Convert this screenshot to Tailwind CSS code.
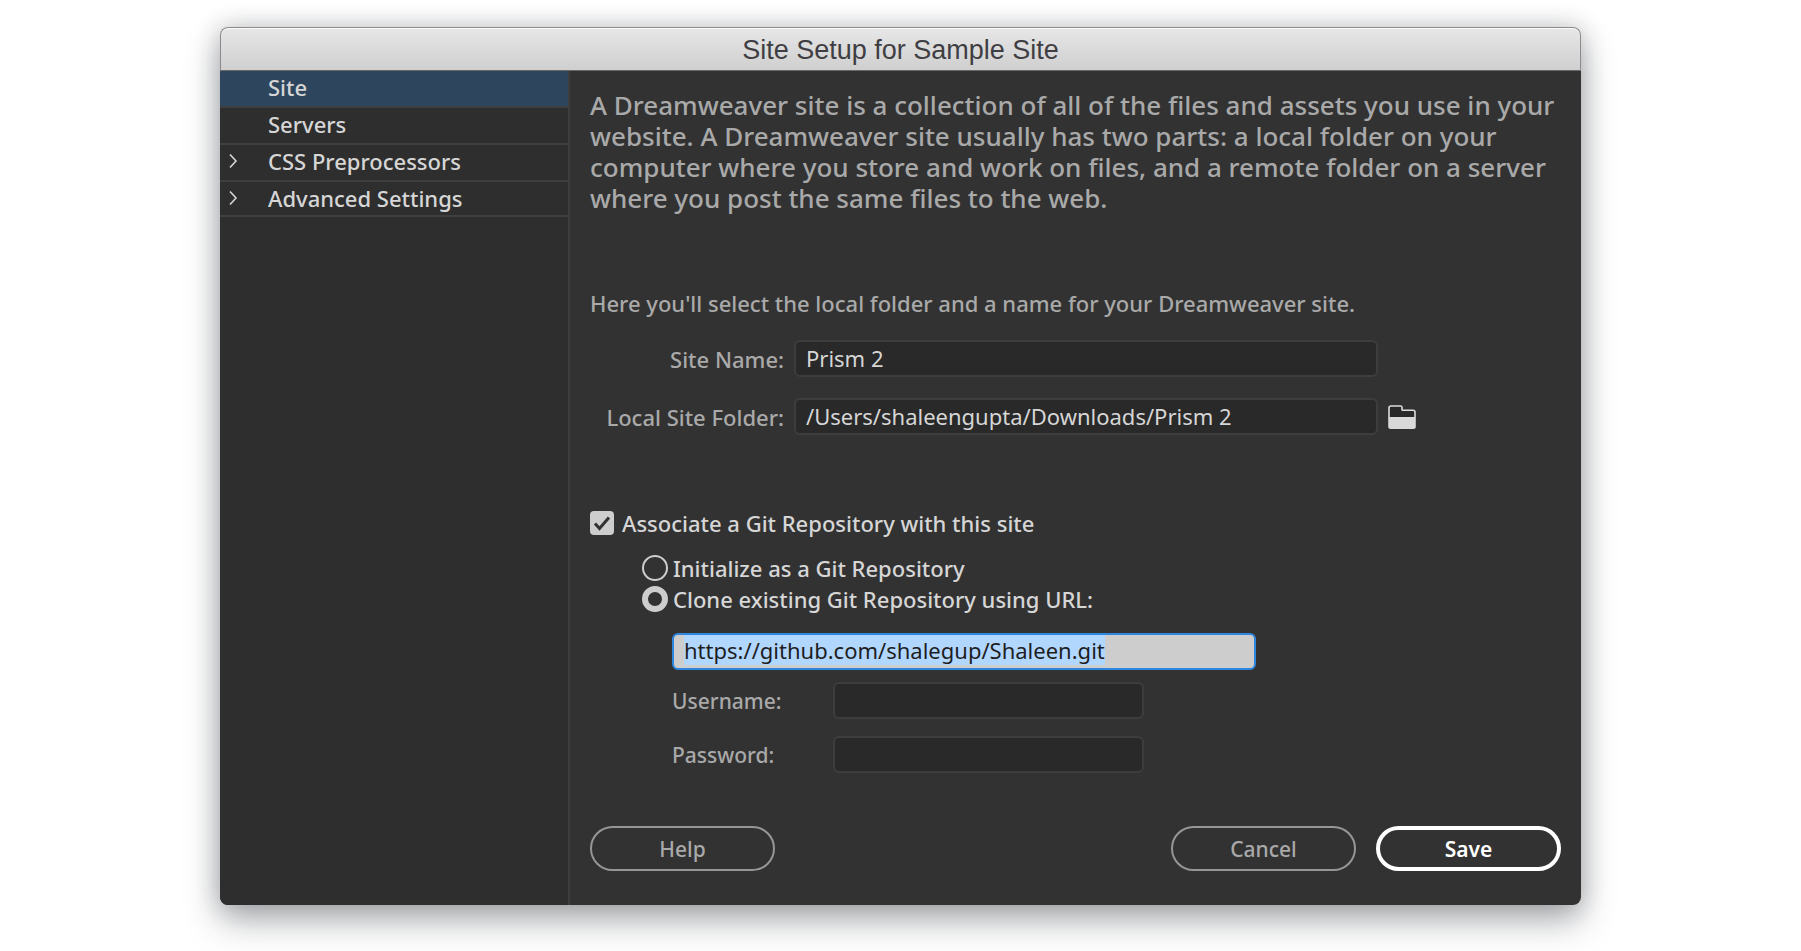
<!DOCTYPE html>
<html lang="en">
<head>
<meta charset="utf-8">
<title>Site Setup for Sample Site</title>
<script src="https://cdn.jsdelivr.net/npm/@tailwindcss/browser@4"></script>
</head>
<body class="bg-white px-[220px] pt-[27px] pb-[46px] font-['Noto_Sans',sans-serif] font-medium text-[22px] leading-7 text-[#d6d6d6]">
<div role="dialog" aria-labelledby="title" class="rounded-lg shadow-[0_16px_34px_rgba(40,44,54,0.36),0_0_24px_rgba(40,44,54,0.24)]">
  <header class="flex h-[44px] items-center justify-center rounded-t-lg border border-[#8b8b8d] border-b-[#686868] bg-linear-to-b from-[#e8e7e8] to-[#cfcfcf] pt-0.5 shadow-[inset_0_1px_0_#fafafa]">
    <h1 id="title" class="font-['Liberation_Sans',sans-serif] text-[27px] leading-8 font-normal text-[#3f3e43]">Site Setup for Sample Site</h1>
  </header>
  <div class="flex rounded-b-lg bg-[#323232]">
    <nav class="w-[350px] shrink-0 rounded-bl-lg border-r-2 border-[#3d3d3d] bg-[#2e2e2e]">
      <ul>
        <li><a href="#site" aria-current="page" class="flex h-[35px] items-center bg-[#2d455d] pb-1 pl-12">Site</a></li>
        <li><a href="#servers" class="flex h-[37px] items-center border-t-2 border-[#3f3f3f] pb-1 pl-12">Servers</a></li>
        <li><a href="#css" class="flex h-[37px] items-center border-t-2 border-[#3f3f3f] pb-1 pl-2">
          <svg class="mr-[30px] h-4 w-[10px]" viewBox="0 0 10 16" fill="none" stroke="#d6d6d6" stroke-width="1.600"><path d="M2 1.500 8 8l-6 6.500"/></svg>CSS Preprocessors</a></li>
        <li><a href="#advanced" class="flex h-[37px] items-center border-y-2 border-[#3f3f3f] pb-0.5 pl-2">
          <svg class="mr-[30px] h-4 w-[10px]" viewBox="0 0 10 16" fill="none" stroke="#d6d6d6" stroke-width="1.600"><path d="M2 1.500 8 8l-6 6.500"/></svg>Advanced Settings</a></li>
      </ul>
    </nav>
    <form class="min-w-0 flex-1 pt-[19px] pr-5 pb-[34px] pl-5 text-[#a9a9a9]">
      <p class="text-[26px] leading-[31px]">A Dreamweaver site is a collection of all of the files and assets you use in your website. A Dreamweaver site usually has two parts: a local folder on your computer where you store and work on files, and a remote folder on a server where you post the same files to the web.</p>
      <p class="mt-[75px]">Here you'll select the local folder and a name for your Dreamweaver site.</p>
      <div class="mt-[23px] flex items-center gap-[10px]">
        <label for="name" class="w-[194px] text-right">Site Name:</label>
        <input id="name" type="text" value="Prism 2" class="h-[37px] w-[584px] rounded-md border-2 border-[#3d3d3d] bg-[#292929] px-[10px] pb-0.5 font-normal text-[#d6d6d6]">
      </div>
      <div class="mt-[21px] flex items-center gap-[10px]">
        <label for="folder" class="w-[194px] text-right">Local Site Folder:</label>
        <input id="folder" type="text" value="/Users/shaleengupta/Downloads/Prism 2" class="h-[37px] w-[584px] rounded-md border-2 border-[#3d3d3d] bg-[#292929] px-[10px] pb-0.5 font-normal text-[#d6d6d6]">
        <button type="button" aria-label="Browse for folder">
          <svg class="h-6 w-7" viewBox="0 0 28 24"><path d="M1 12V3q0-2 2-2h9.500q1.500 0 1.500 1.500V4.500q0 .7.700.7H25q2 0 2 2V12" fill="#292929" stroke="#dcdcdc" stroke-width="1.600"/><path d="M.2 12h27.600v9.500q0 2.500-2.500 2.500H2.700Q.2 24 .2 21.500z" fill="#d9d9d9"/></svg>
        </button>
      </div>
      <div class="mt-[74px] flex items-center gap-2 text-[#d6d6d6]">
        <span class="grid">
          <input id="git" type="checkbox" checked class="col-start-1 row-start-1 size-6 appearance-none rounded-sm bg-[#cdcdcd]">
          <svg class="pointer-events-none col-start-1 row-start-1 size-6" viewBox="0 0 24 24" fill="none" stroke="#323232" stroke-width="3"><path d="m5 12.500 4.500 5L19 6.500"/></svg>
        </span>
        <label for="git">Associate a Git Repository with this site</label>
      </div>
      <div class="mt-[15px] ml-[52px] text-[#d6d6d6]">
        <div class="flex h-[31px] items-center gap-[5px]">
          <input id="init" type="radio" name="mode" class="size-[26px] appearance-none rounded-full border-2 border-[#cdcdcd] checked:border-[6px]">
          <label for="init">Initialize as a Git Repository</label>
        </div>
        <div class="flex h-[31px] items-center gap-[5px]">
          <input id="clone" type="radio" name="mode" checked class="size-[26px] appearance-none rounded-full border-2 border-[#cdcdcd] checked:border-[6px]">
          <label for="clone">Clone existing Git Repository using URL:</label>
        </div>
      </div>
      <div class="ml-[82px]">
        <input id="url" type="text" aria-label="Repository URL" value="https://github.com/shalegup/Shaleen.git" autofocus class="mt-[19px] block h-[37px] w-[584px] rounded-md border-2 border-[#2f86e0] bg-[#cdcdcd] px-[10px] pb-1 font-normal text-[#1e1e1e] outline-none selection:bg-[#b2d7ff] selection:text-[#1e1e1e]">
        <div class="mt-3 flex items-center">
          <label for="user" class="w-[161px] text-[21px]">Username:</label>
          <input id="user" type="text" class="h-[37px] w-[311px] rounded-md border-2 border-[#3d3d3d] bg-[#292929] px-[10px]">
        </div>
        <div class="mt-[17px] flex items-center">
          <label for="pass" class="w-[161px] text-[21px]">Password:</label>
          <input id="pass" type="password" class="h-[37px] w-[311px] rounded-md border-2 border-[#3d3d3d] bg-[#292929] px-[10px]">
        </div>
      </div>
      <div class="mt-[53px] flex gap-5 text-[21px]">
        <button type="button" class="mr-auto h-[45px] w-[185px] rounded-full border-2 border-[#969696]">Help</button>
        <button type="button" class="h-[45px] w-[185px] rounded-full border-2 border-[#969696]">Cancel</button>
        <button type="submit" class="h-[45px] w-[185px] rounded-full border-4 border-white font-semibold text-white">Save</button>
      </div>
    </form>
  </div>
</div>
<script>
  document.getElementById('url').focus();
  document.getElementById('url').select();
</script>
</body>
</html>
